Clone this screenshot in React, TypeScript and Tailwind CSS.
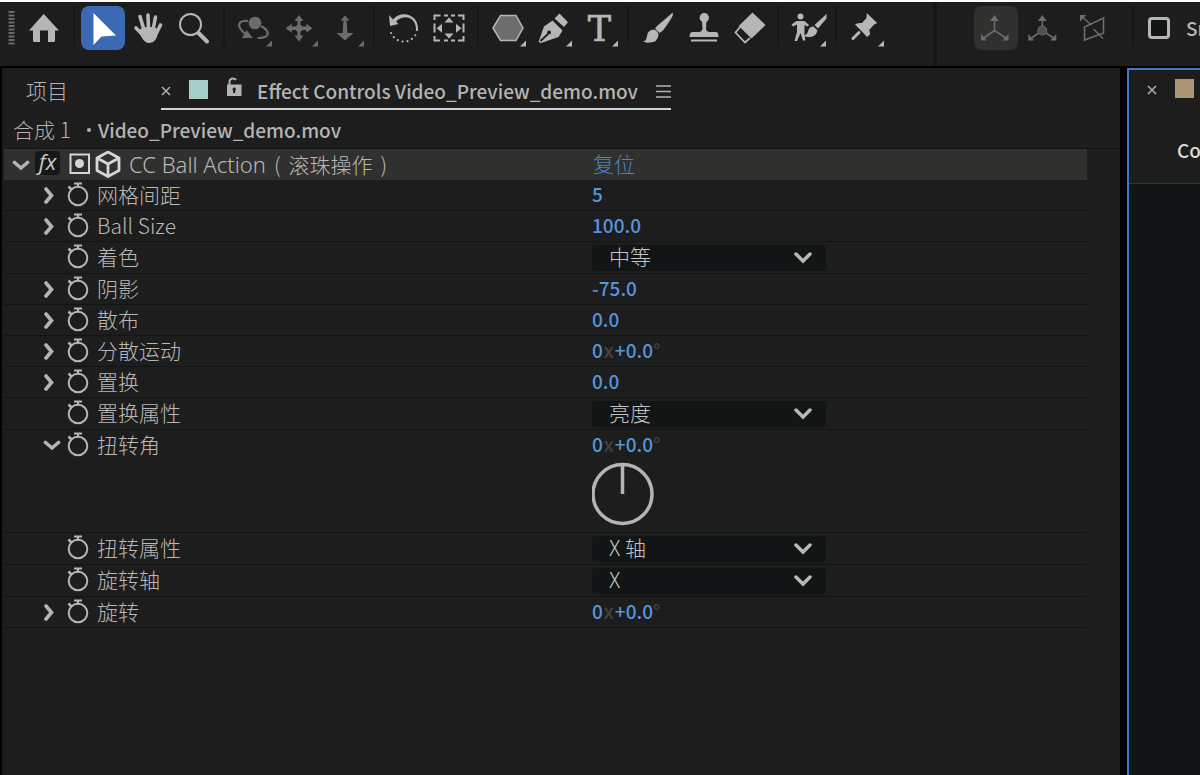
import React, { useState } from 'react';
import clsx from 'clsx';

type Param = {
  id: string;
  label: string;
  kind: 'number' | 'angle' | 'select' | 'dial';
  value: string;
};

const PARAMS: Param[] = [
  { id: 'grid', label: '网格间距', kind: 'number', value: '5' },
  { id: 'size', label: 'Ball Size', kind: 'number', value: '100.0' },
  { id: 'shading', label: '着色', kind: 'select', value: '中等' },
  { id: 'shadow', label: '阴影', kind: 'number', value: '-75.0' },
  { id: 'scatter', label: '散布', kind: 'number', value: '0.0' },
  { id: 'scatter-motion', label: '分散运动', kind: 'angle', value: '+0.0' },
  { id: 'displace', label: '置换', kind: 'number', value: '0.0' },
  { id: 'displace-prop', label: '置换属性', kind: 'select', value: '亮度' },
  { id: 'twist', label: '扭转角', kind: 'dial', value: '+0.0' },
  { id: 'twist-prop', label: '扭转属性', kind: 'select', value: 'X 轴' },
  { id: 'axis', label: '旋转轴', kind: 'select', value: 'X' },
  { id: 'rotation', label: '旋转', kind: 'angle', value: '+0.0' },
];

const CLEAN = 'font-["Noto_Sans_CJK_SC","Noto_Sans",sans-serif] font-medium';
const LIGHT = 'font-["Noto_Sans_CJK_SC","Noto_Sans",sans-serif] font-light';

interface ToolProps {
  label: string;
  active?: boolean;
  pressed?: boolean;
  dim?: boolean;
  flyout?: boolean;
  children: React.ReactNode;
}

// Every tool is drawn on a 44 x 44 grid
const Tool: React.FC<ToolProps> = ({ label, active, pressed, dim, flyout, children }) => (
  <button
    aria-label={label}
    className={clsx(
      'size-11 shrink-0 rounded-lg',
      active && 'bg-[#3b69b3]',
      pressed && 'bg-[#30302f]',
      active ? 'text-white' : dim ? 'text-[#6c6c6c]' : 'text-[#b6b6b6]',
    )}
  >
    <svg viewBox="0 0 44 44" className="size-11" fill="currentColor">
      {children}
      {flyout && <path d="M41 34.5v6h-6z" />}
    </svg>
  </button>
);

const Separator = () => <span className="mx-1 h-10 w-0.5 shrink-0 bg-[#151616]" />;

const Toolbar = () => (
  <header className="flex h-16 bg-[#1d1d1d]">
    <div className="flex flex-1 items-start gap-0.5 overflow-hidden pl-2 pt-1">
      <svg viewBox="0 0 7 36" className="mr-1.5 mt-1 h-9 w-[7px] shrink-0">
        <path d="M3.5 1v35" stroke="#6a6a6a" strokeWidth="6" strokeDasharray="2 1.5" />
      </svg>
      <Tool label="Home">
        <path d="M20.7 8 36 24.5h-4V34.500q0 1.500-1.500 1.500H25V24.500h-8V36h-5.500q-1.500 0-1.500-1.500V24.500H6z" />
      </Tool>
      <Separator />
      <Tool label="Selection" active>
        <path d="M12.500 7v32l8-8.500 14.500-1z" />
      </Tool>
      <Tool label="Hand">
        <g fill="none" stroke="currentColor" strokeWidth="3.600" strokeLinecap="round">
          <path d="M13 10.500 17 24M21 9l.5 14M28.500 11 26 24M33.500 19 29 28" />
          <path d="m9 22 7 7" />
        </g>
        <path d="M14 22.500q8-3.500 16 0l1 4q-1.500 10.500-8.500 10.500-5 0-8-6l-3-5z" />
      </Tool>
      <Tool label="Zoom">
        <g fill="none" stroke="currentColor">
          <circle cx="17.500" cy="18.500" r="10.500" strokeWidth="2" />
          <path d="m25.500 27 8.500 8.500" strokeWidth="4" strokeLinecap="round" />
        </g>
      </Tool>
      <Separator />
      <Tool label="Orbit" dim flyout>
        <circle cx="24" cy="17" r="6.300" />
        <g fill="none" stroke="currentColor" strokeWidth="2.200">
          <path d="M17 15C10 14 7 17 8.500 21c1 3 3 4.500 7 8" />
          <path d="M30 20c6 3 8 7 6 9.500-2 2.500-6 2.500-9.500 2.500" />
        </g>
        <path d="M15.500 24 22 32H11z" />
      </Tool>
      <Tool label="Pan" dim flyout>
        <path d="M20.500 14h3v6.500H30v3.500h-6.500V31h-3v-7H14v-3.500h6.500z" />
        <circle cx="22" cy="22.300" r="3.500" />
        <path d="m22 9 4.500 6h-9zM22 35.500l4.500-6h-9zM8.700 22.300l6-4.500v9zM35.300 22.300l-6-4.500v9z" />
      </Tool>
      <Tool label="Dolly" dim flyout>
        <path d="m22 9.500 4.500 5h-9zM20.500 14h3l1 14h-5zM13.500 27h17L22 34.500z" />
      </Tool>
      <Separator />
      <Tool label="Rotate">
        <path d="M12 13.500C21 3.500 37 9 37 22.500V25h-2C36 12 24 7 15 15.500l2.500 2.500L9 20 8 9z" />
        <path d="M10 27c5 11 20 12 25.500 0" fill="none" stroke="currentColor" strokeWidth="2.200" strokeLinecap="round" strokeDasharray="0 5" />
      </Tool>
      <Tool label="Pan Behind">
        <path d="M7.500 14V9.500h6M17 9.500h4M24 9.500h4M31 9.500h5.500V14M36.500 17.500v9M36.500 30v4.500H31M28 34.500h-4M21 34.500h-4M13 34.500H7.500V30M7.500 26.500v-9" fill="none" stroke="currentColor" strokeWidth="2" />
        <path d="m22 11.500 4.500 5h-9zM22 32.500l4.500-5h-9zM9.700 22.200l5.300-4.500v9zM34.500 22.200l-5.500-4.500v9z" />
      </Tool>
      <Separator />
      <Tool label="Shape" flyout>
        <path d="m8 22 7.500-12.500h15.500L38 22l-7 12.500H15.500z" fill="#6d6d6d" stroke="currentColor" strokeWidth="1.500" />
      </Tool>
      <Tool label="Pen" flyout>
        <path d="m28.500 7.500 8.500 8.800-4 4.700-9.500-8.500z" />
        <path d="M21.500 14.500 31.500 24.500 27.500 31 10 37l-2.500-1 5.500-15.500z" />
        <path d="m9.500 35 7.500-7" stroke="#1d1d1d" strokeWidth="1.800" />
        <circle cx="18" cy="26.500" r="2" fill="#1d1d1d" />
      </Tool>
      <Tool label="Type" flyout>
        <text x="22.500" y="35" textAnchor="middle" className='font-["DejaVu_Serif",serif] text-[35px]' stroke="currentColor" strokeWidth="0.700">
          T
        </text>
      </Tool>
      <Separator />
      <Tool label="Brush">
        <path d="M36 8q2-2 2 .500-.5 3-10 16l-3.500 2.500-4.500-4.500 1.500-2z" />
        <path d="M19 23.500q4.500 1.500 4.500 5.500-1 7.500-8.500 7.500-4.500.5-7-1 3.500-.5 4-5.500.5-6 7-6.500z" />
      </Tool>
      <Tool label="Clone Stamp">
        <circle cx="23.300" cy="11.800" r="4.700" />
        <path d="M21 15h4.500l-.5 8q.2 2.500 3 3h7q2.500 0 2.500 5H8.500q0-5 3-5h7q2.500-.5 3-3z" />
        <path d="M10 34.500h26" stroke="currentColor" strokeWidth="2" />
      </Tool>
      <Tool label="Eraser">
        <path d="M25.500 6.500 38.500 19 24.500 32.500 11.700 20z" />
        <path d="m13.500 20.500-5 6 9.500 10 5-4.500" fill="none" stroke="currentColor" strokeWidth="1.800" />
      </Tool>
      <Separator />
      <Tool label="Roto Brush" flyout>
        <circle cx="15.500" cy="10.500" r="3" />
        <path d="m6.500 18.500 5-3.500h8l4.500 4-1.500 1.500-3-1.500v9l1 6.500h-2.500L15.500 27 12 35H9.500l2.500-9v-7.500l-4 2z" />
        <path d="M41.500 8v4.500L33 22.500l-3.500-3.500zM28.500 20.500l4 4q-1.500 6.500-7.500 6.500-4 .5-6-1.500 3-.5 4-4 1-5 5.500-5z" />
      </Tool>
      <Separator />
      <Tool label="Puppet Pin" flyout>
        <path d="m23.700 7 10.500 10-3 1.500-5 5.500 1 4-3 3L12 18.500q2-2 7-1.500l4.500-5z" />
        <path d="m16 26.500-6 6" stroke="currentColor" strokeWidth="3" strokeLinecap="round" />
      </Tool>
    </div>
    <div className="flex w-[267px] items-start gap-0.5 overflow-hidden border-l-4 border-[#141617] pl-[37px] pt-1">
      <Tool label="Local Axis" dim pressed>
        <path d="M20.500 12v12.500L9 32.500M20.500 24.500l12 8" fill="none" stroke="currentColor" strokeWidth="1.600" />
        <path d="m20.500 9 4.500 6h-9zM7 34.500V28l6 6.500zM34.500 34.500V28l-6 6.500z" />
      </Tool>
      <Tool label="World Axis" dim>
        <path d="M22.300 12v12.500l-11.500 8M22.300 24.500l12 8" fill="none" stroke="currentColor" strokeWidth="1.600" />
        <path d="m22.300 9 4.500 6h-9zM8.300 34.500V28l6 6.500zM36.300 34.500V28l-6 6.500z" />
        <circle cx="22.300" cy="24.500" r="4.500" fill="#4f4f4f" stroke="currentColor" />
      </Tool>
      <span className="w-0.5 shrink-0" />
      <Tool label="View Axis" dim>
        <path d="m14.500 21 19-9v15l-19 7zM11 10l10.500 9M23.500 23l9.500 9.500" fill="none" stroke="currentColor" strokeWidth="1.600" />
        <path d="M10 9h6.500L10 15.500z" />
      </Tool>
      <span className="mr-3 ml-4 h-10 w-0.5 shrink-0 bg-[#151616]" />
      <label className={`${CLEAN} flex h-11 shrink-0 items-center gap-4 text-[19px] text-[#b6b6b6]`}>
        <input type="checkbox" className="size-[22px] appearance-none rounded border-3 border-[#b6b6b6] bg-[#111516]" />
        Sn
      </label>
    </div>
  </header>
);

const Cross = () => (
  <svg viewBox="0 0 10 10" className="size-2.5" stroke="#b0b0b0" strokeWidth="1.5">
    <path d="m1 1 8 8M9 1 1 9" />
  </svg>
);

const Chevron: React.FC<{ open?: boolean }> = ({ open }) => (
  <svg viewBox="0 0 18 18" className="size-[18px]" fill="none" stroke="#b4b4b4" strokeWidth="3.600" strokeLinecap="round">
    <path d={open ? 'm2.500 6.500 6.500 5.500 6.500-5.500' : 'm3 3 5.500 6.500-5.500 6.500'} />
  </svg>
);

const Stopwatch = () => (
  <svg viewBox="0 0 24 28" className="h-7 w-6" fill="none" stroke="#b6b6b6">
    <circle cx="12" cy="15" r="9.300" strokeWidth="2" />
    <path d="M8 2.500h8M12 2v4" strokeWidth="2.200" />
    <path d="m2.500 5.500 3 3" strokeWidth="2.500" />
  </svg>
);

const ValueCell: React.FC<{ param: Param }> = ({ param }) => {
  if (param.kind === 'select') {
    return (
      <div className="relative w-[234px] pt-[3px] pb-0.5">
        <select
          id={param.id}
          className={`${LIGHT} block h-[26px] w-full appearance-none rounded bg-[#111516] pb-[3px] pl-[17px] text-[21px] leading-[23px] text-[#c4c4c4]`}
        >
          <option>{param.value}</option>
        </select>
        <svg viewBox="0 0 20 12" className="pointer-events-none absolute right-[13px] top-2.5 h-3 w-5" fill="none" stroke="#b8b8b8" strokeWidth="3.500" strokeLinecap="round">
          <path d="m3 2 7 7L17 2" />
        </svg>
      </div>
    );
  }

  return (
    <div className={`${CLEAN} text-[19px] leading-[28px] text-[#5496dd]`}>
      <button id={param.id}>
        {param.kind === 'number' ? (
          param.value
        ) : (
          <>
            0<span className="mx-px text-[#424242]">x</span>
            {param.value}
            <span className="text-[#424242]">°</span>
          </>
        )}
      </button>
      {param.kind === 'dial' && (
        <svg viewBox="0 0 64 66" className="mt-0.5 mb-1.5 h-[66px] w-16" fill="none" stroke="#b4b4b4">
          <circle cx="30.500" cy="34" r="29.500" strokeWidth="3.500" />
          <path d="M30.500 5v29" strokeWidth="3.500" />
        </svg>
      )}
    </div>
  );
};

const ParamRow: React.FC<{ param: Param }> = ({ param }) => (
  <div className="grid grid-cols-[588px_1fr] border-b border-[#111414]">
    <div className="flex h-[30px] items-center pl-[39px]">
      {param.kind === 'select' ? (
        <span className="w-[18px]" />
      ) : (
        <button aria-label="展开">
          <Chevron open={param.kind === 'dial'} />
        </button>
      )}
      <button aria-label="关键帧" className="ml-[5px]">
        <Stopwatch />
      </button>
      <label htmlFor={param.id} className={`${LIGHT} ml-[7px] pb-0.5 text-[21px] leading-[28px] text-[#b8b8b8]`}>
        {param.label}
      </label>
    </div>
    <ValueCell param={param} />
  </div>
);

const EffectHeader: React.FC<{ open: boolean; onToggle: () => void }> = ({ open, onToggle }) => (
  <div className="grid h-[31px] grid-cols-[589px_1fr] items-center bg-[#30302f]">
    <div className="flex items-center pl-2">
      <button aria-label="展开" onClick={onToggle}>
        <Chevron open={open} />
      </button>
      <button className='mb-1 ml-[5px] h-6 w-[25px] rounded bg-[#151819] pb-1 font-["Open_Sans",sans-serif] text-[22px] leading-5 text-[#c8c8c8] italic'>
        fx
      </button>
      <svg viewBox="0 0 22 22" className="mb-0.5 ml-[9px] size-[22px]">
        <rect x="1.500" y="1.500" width="18.500" height="18.500" fill="none" stroke="#d6d6d6" strokeWidth="2" />
        <circle cx="10.500" cy="10.500" r="4.500" fill="#d6d6d6" />
      </svg>
      <svg viewBox="0 0 26 28" className="ml-1 h-7 w-[26px]" fill="none" stroke="#d6d6d6" strokeWidth="2.800" strokeLinejoin="round">
        <path d="m13 1 11 6v12.500L13 25.500 2 19.500V7zM2 7l11 6 11-6M13 13v12" />
      </svg>
      <div className={`${LIGHT} ml-2 flex items-baseline gap-2 pb-0.5 text-[21px] leading-[26px] text-[#b8b8b8]`}>
        <span className='font-["Noto_Sans",sans-serif] text-[22px]'>CC Ball Action</span>
        <span>(</span>
        <span>滚珠操作</span>
        <span>)</span>
      </div>
    </div>
    <button className={`${LIGHT} justify-self-start pb-1 text-[21px] leading-[26px] text-[#4a86c4]`}>复位</button>
  </div>
);

const EffectControls = () => {
  const [open, setOpen] = useState(true);

  return (
    <section className="min-w-0 flex-1 overflow-hidden bg-[#1d1d1d] pl-0.5">
      <nav className="flex h-[42px] text-[#b4b4b4]">
        <button className={`${LIGHT} ml-[22px] w-[135px] pt-1 text-left text-[21px]`}>项目</button>
        <div className="flex w-[510px] items-center border-b-2 border-[#d2d2d2] pt-1.5">
          <button aria-label="关闭">
            <Cross />
          </button>
          <span className="mb-1 ml-[18px] size-[19px] bg-[#a7cdc7]" />
          <svg viewBox="0 0 16 20" className="mb-2 ml-[18px] h-5 w-4">
            <path d="M3.500 8V5q0-3.500 3.500-3.500 2 0 3 1.500" fill="none" stroke="#b4b4b4" strokeWidth="2" />
            <path d="M1 7.500h14.500V19H1z" fill="#b4b4b4" />
            <path d="M8.200 10.500a1.800 1.800 0 0 1 1 3.200V16H7.200v-2.300a1.800 1.800 0 0 1 1-3.200" fill="#1d1d1d" />
          </svg>
          <span className={`${CLEAN} ml-[15px] text-[19px] whitespace-nowrap`}>Effect Controls Video_Preview_demo.mov</span>
          <button aria-label="菜单" className="ml-auto">
            <svg viewBox="0 0 15 13" className="h-[13px] w-[15px]" stroke="#b4b4b4" strokeWidth="1.500">
              <path d="M0 1h15M0 6.500h15M0 12h15" />
            </svg>
          </button>
        </div>
      </nav>
      <div className="flex h-[39px] items-center border-b border-[#111414] pt-0.5 pl-[9px] text-[#b4b4b4]">
        <span className={`${LIGHT} text-[21px]`}>合成 1</span>
        <span className="ml-4 size-1 rounded-full bg-[#b4b4b4]" />
        <span className={`${CLEAN} ml-[7px] text-[19px]`}>Video_Preview_demo.mov</span>
      </div>
      <div className="mr-[33px]">
        <EffectHeader open={open} onToggle={() => setOpen(!open)} />
        {open && PARAMS.map(p => <ParamRow key={p.id} param={p} />)}
      </div>
    </section>
  );
};

const CompositionPanel = () => (
  <section className="flex w-[73px] flex-col overflow-hidden border-t-2 border-l-2 border-[#3f79c0] bg-[#111516]">
    <div className="h-[114px] border-b border-[#333536] bg-[#1d1d1d]">
      <div className="flex h-10 items-center pl-[18px]">
        <button aria-label="关闭">
          <Cross />
        </button>
        <span className="mb-1 ml-[18px] size-[19px] shrink-0 bg-[#ab9776]" />
      </div>
      <div className={`${CLEAN} pt-[26px] pl-12 text-[19px] text-[#dcdcdc]`}>Co</div>
    </div>
  </section>
);

export default function App() {
  return (
    <div className="flex min-h-screen flex-col overflow-hidden border-t-2 border-white bg-black">
      <Toolbar />
      <main className="mt-0.5 flex flex-1 gap-[7px] pl-0.5">
        <EffectControls />
        <CompositionPanel />
      </main>
    </div>
  );
}
